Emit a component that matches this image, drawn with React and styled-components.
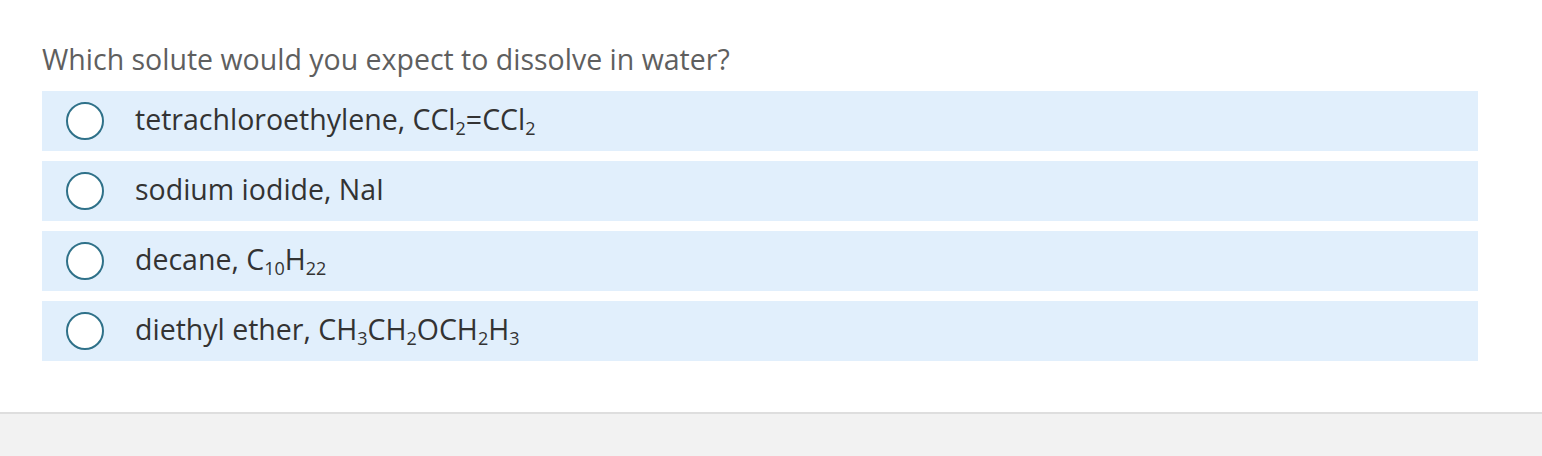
import styled, { createGlobalStyle } from "styled-components";

const GlobalStyle = createGlobalStyle`
  html, body {
    margin: 0;
    padding: 0;
    background: #fff;
  }
  body {
    font-family: "Open Sans", "Lato", sans-serif;
  }
`;

const Page = styled.div`
  width: 1542px;
  height: 456px;
  display: flex;
  flex-direction: column;
  overflow: hidden;
`;

const Question = styled.section`
  flex: 0 0 412px;
  padding: 40px 64px 0 42px;
  box-sizing: border-box;
`;

const Prompt = styled.h2`
  margin: 0 0 13px;
  font-size: 28.5px;
  font-weight: 400;
  line-height: 38px;
  color: #5f5f5f;
`;

const Choices = styled.div`
  display: flex;
  flex-direction: column;
  gap: 10px;
`;

const Choice = styled.label`
  display: flex;
  align-items: center;
  height: 60px;
  background: #e1effc;
  padding-left: 24px;
  cursor: pointer;
`;

const Radio = styled.span`
  width: 38px;
  height: 38px;
  box-sizing: border-box;
  border-radius: 50%;
  border: 2px solid #2f7189;
  background: #fff;
  flex-shrink: 0;
`;

const ChoiceText = styled.span`
  margin-left: 31px;
  padding-bottom: 4px;
  font-size: 28.5px;
  line-height: 38px;
  color: #333;

  sub {
    font-size: 18px;
    vertical-align: -5px;
    line-height: 0;
  }
`;

const Footer = styled.footer`
  flex: 1;
  border-top: 2px solid #dedede;
  background: #f2f2f2;
`;

const options = [
  <>tetrachloroethylene, CCl<sub>2</sub>=CCl<sub>2</sub></>,
  <>sodium iodide, NaI</>,
  <>decane, C<sub>10</sub>H<sub>22</sub></>,
  <>diethyl ether, CH<sub>3</sub>CH<sub>2</sub>OCH<sub>2</sub>H<sub>3</sub></>,
];

export default function App() {
  return (
    <>
      <GlobalStyle />
      <Page>
        <Question>
          <Prompt>Which solute would you expect to dissolve in water?</Prompt>
          <Choices>
            {options.map((o, i) => (
              <Choice key={i}>
                <Radio />
                <ChoiceText>{o}</ChoiceText>
              </Choice>
            ))}
          </Choices>
        </Question>
        <Footer />
      </Page>
    </>
  );
}
